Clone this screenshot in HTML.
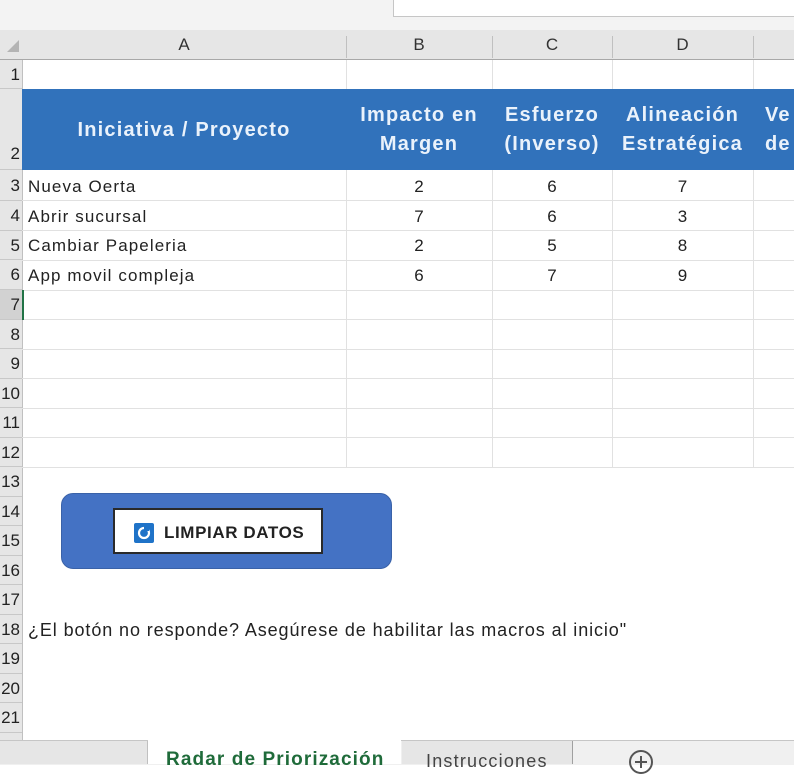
<!DOCTYPE html>
<html><head><style>
body{margin:0;width:794px;height:764px;overflow:hidden;background:#fff;font-family:"Liberation Sans",sans-serif;position:relative}
.a{position:absolute}
.rh{position:absolute;left:0;width:22px;background:#e6e6e6;border-bottom:1px solid #c8c8c8;font-size:17px;color:#222;text-align:right;box-sizing:border-box;padding-right:2px;overflow:hidden;white-space:nowrap;direction:rtl}
.hl{position:absolute;height:1px;background:#e1e1e1;left:22px}
.vl{position:absolute;width:1px;background:#e1e1e1}
.c{position:absolute;font-size:17px;color:#222;text-align:center}
.t{letter-spacing:1.1px}
.h{position:absolute;color:#eaf2fb;font-weight:bold;font-size:20px;text-align:center;line-height:29px;letter-spacing:1.2px;white-space:nowrap}
</style></head><body>
<div class="a" style="left:0;top:0;width:794px;height:30px;background:#f3f3f3"></div>
<div class="a" style="left:393px;top:-1px;width:410px;height:16px;background:#fff;border:1px solid #c6c6c6"></div>
<div class="a" style="left:0;top:30px;width:794px;height:30px;background:#e6e6e6;border-bottom:1px solid #a8a8a8;box-sizing:border-box"></div>
<svg class="a" style="left:4px;top:38px" width="16" height="16"><polygon points="15,2 15,14 3,14" fill="#b4b4b4"/></svg>
<div class="a" style="left:22px;top:30px;width:324px;line-height:30px;text-align:center;font-size:17px;color:#333">A</div>
<div class="a" style="left:346px;top:30px;width:146px;line-height:30px;text-align:center;font-size:17px;color:#333">B</div>
<div class="a" style="left:492px;top:30px;width:120px;line-height:30px;text-align:center;font-size:17px;color:#333">C</div>
<div class="a" style="left:612px;top:30px;width:141px;line-height:30px;text-align:center;font-size:17px;color:#333">D</div>
<div class="a" style="left:346px;top:36px;width:1px;height:22px;background:#c0c0c0"></div>
<div class="a" style="left:492px;top:36px;width:1px;height:22px;background:#c0c0c0"></div>
<div class="a" style="left:612px;top:36px;width:1px;height:22px;background:#c0c0c0"></div>
<div class="a" style="left:753px;top:36px;width:1px;height:22px;background:#c0c0c0"></div>
<div class="a" style="left:0;top:60px;width:22px;height:680px;background:#e6e6e6;border-right:1px solid #c0c0c0"></div>
<div class="rh" style="top:60px;height:29px;line-height:29px">1</div>
<div class="rh" style="top:89px;height:81px;line-height:130px">2</div>
<div class="rh" style="top:170px;height:31px;line-height:31px">3</div>
<div class="rh" style="top:201px;height:30px;line-height:30px">4</div>
<div class="rh" style="top:231px;height:29px;line-height:29px">5</div>
<div class="rh" style="top:260px;height:30px;line-height:30px">6</div>
<div class="rh" style="top:290px;height:30px;line-height:30px;background:#d2d2d2">7</div>
<div class="rh" style="top:320px;height:29px;line-height:29px">8</div>
<div class="rh" style="top:349px;height:30px;line-height:30px">9</div>
<div class="rh" style="top:379px;height:29px;line-height:29px">10</div>
<div class="rh" style="top:408px;height:30px;line-height:30px">11</div>
<div class="rh" style="top:438px;height:29px;line-height:29px">12</div>
<div class="rh" style="top:467px;height:30px;line-height:30px">13</div>
<div class="rh" style="top:497px;height:29px;line-height:29px">14</div>
<div class="rh" style="top:526px;height:30px;line-height:30px">15</div>
<div class="rh" style="top:556px;height:29px;line-height:29px">16</div>
<div class="rh" style="top:585px;height:30px;line-height:30px">17</div>
<div class="rh" style="top:615px;height:29px;line-height:29px">18</div>
<div class="rh" style="top:644px;height:30px;line-height:30px">19</div>
<div class="rh" style="top:674px;height:29px;line-height:29px">20</div>
<div class="rh" style="top:703px;height:30px;line-height:30px">21</div>
<div class="a" style="left:22px;top:89px;width:772px;height:81px;background:#3172bb"></div>
<div class="h" style="left:22px;top:116px;width:324px">Iniciativa / Proyecto</div>
<div class="h" style="left:346px;top:101px;width:146px">Impacto en<br>Margen</div>
<div class="h" style="left:492px;top:101px;width:120px">Esfuerzo<br>(Inverso)</div>
<div class="h" style="left:612px;top:101px;width:141px">Alineación<br>Estratégica</div>
<div class="h" style="left:753px;top:101px;width:60px;text-align:left;padding-left:12px">Ve<br>de</div>
<div class="hl" style="top:200px;width:772px"></div><div class="hl" style="top:230px;width:772px"></div>
<div class="hl" style="top:260px;width:772px"></div><div class="hl" style="top:290px;width:772px"></div>
<div class="hl" style="top:319px;width:772px"></div><div class="hl" style="top:349px;width:772px"></div>
<div class="hl" style="top:378px;width:772px"></div><div class="hl" style="top:408px;width:772px"></div>
<div class="hl" style="top:437px;width:772px"></div><div class="hl" style="top:467px;width:772px"></div>
<div class="vl" style="left:346px;top:170px;height:297px"></div><div class="vl" style="left:492px;top:170px;height:297px"></div>
<div class="vl" style="left:612px;top:170px;height:297px"></div><div class="vl" style="left:753px;top:170px;height:297px"></div>
<div class="vl" style="left:346px;top:60px;height:29px"></div><div class="vl" style="left:492px;top:60px;height:29px"></div>
<div class="vl" style="left:612px;top:60px;height:29px"></div><div class="vl" style="left:753px;top:60px;height:29px"></div>
<div class="a" style="left:22px;top:290px;width:2px;height:30px;background:#217346"></div>
<div class="c t" style="left:28px;top:177px;text-align:left">Nueva Oerta</div>
<div class="c t" style="left:28px;top:207px;text-align:left">Abrir sucursal</div>
<div class="c t" style="left:28px;top:236px;text-align:left">Cambiar Papeleria</div>
<div class="c t" style="left:28px;top:266px;text-align:left">App movil compleja</div>
<div class="c" style="left:346px;top:177px;width:146px">2</div><div class="c" style="left:492px;top:177px;width:120px">6</div><div class="c" style="left:612px;top:177px;width:141px">7</div>
<div class="c" style="left:346px;top:207px;width:146px">7</div><div class="c" style="left:492px;top:207px;width:120px">6</div><div class="c" style="left:612px;top:207px;width:141px">3</div>
<div class="c" style="left:346px;top:236px;width:146px">2</div><div class="c" style="left:492px;top:236px;width:120px">5</div><div class="c" style="left:612px;top:236px;width:141px">8</div>
<div class="c" style="left:346px;top:266px;width:146px">6</div><div class="c" style="left:492px;top:266px;width:120px">7</div><div class="c" style="left:612px;top:266px;width:141px">9</div>
<div class="a" style="left:61px;top:493px;width:331px;height:76px;background:#4472c4;border-radius:12px;border:1px solid #3a62a8;box-sizing:border-box"></div>
<div class="a" style="left:113px;top:508px;width:210px;height:46px;background:#fff;border:2px solid #2a2a2a;box-sizing:border-box"></div>
<div class="a" style="left:134px;top:523px;width:20px;height:20px;background:#1f73c8;border-radius:2px"><svg width="20" height="20"><circle cx="10" cy="10" r="5" fill="none" stroke="#fff" stroke-width="2.2"/><rect x="10" y="3" width="5" height="5" fill="#1f73c8"/></svg></div>
<div class="a" style="left:164px;top:523px;font-size:17px;font-weight:bold;color:#222;letter-spacing:0.6px">LIMPIAR DATOS</div>
<div class="a" style="left:28px;top:620px;font-size:18px;color:#222;letter-spacing:0.9px;white-space:nowrap">¿El botón no responde? Asegúrese de habilitar las macros al inicio"</div>
<div class="a" style="left:0;top:740px;width:794px;height:24px;background:#f0f0f0;border-top:1px solid #c6c6c6"></div>
<div class="a" style="left:0;top:741px;width:147px;height:23px;background:#e6e6e6;border-right:1px solid #c0c0c0"></div>
<div class="a" style="left:148px;top:738px;width:253px;height:26px;background:#fff"></div>
<div class="a" style="left:166px;top:749px;font-size:19px;font-weight:bold;color:#1f6b3a;letter-spacing:1.1px;white-space:nowrap">Radar de Priorización</div>
<div class="a" style="left:402px;top:741px;width:170px;height:23px;background:#e6e6e6;border-right:1px solid #a0a0a0"></div>
<div class="a" style="left:426px;top:751px;font-size:18px;color:#444;letter-spacing:1.2px">Instrucciones</div>
<svg class="a" style="left:628px;top:749px" width="26" height="26"><circle cx="13" cy="13" r="11" fill="none" stroke="#555" stroke-width="2"/><path d="M13 7v12M7 13h12" stroke="#555" stroke-width="2"/></svg>
</body></html>
